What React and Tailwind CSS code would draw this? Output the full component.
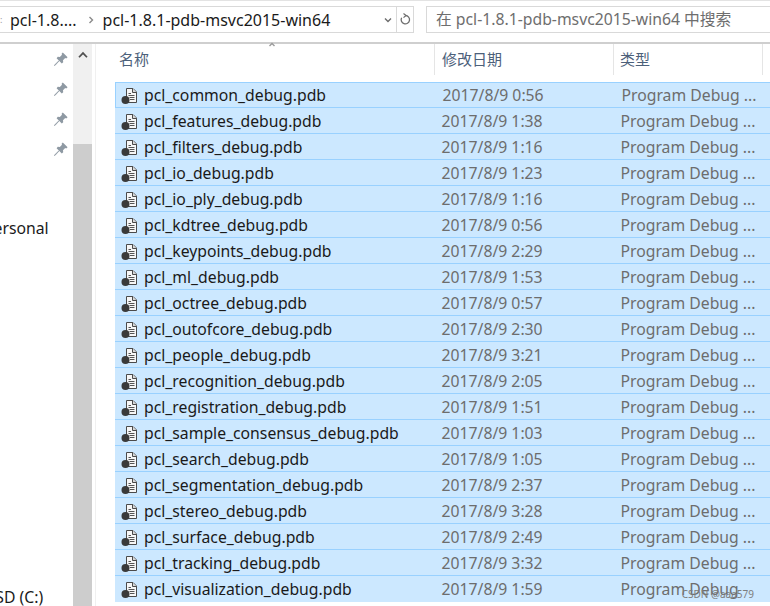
import React from 'react';

const files = [
  ['pcl_common_debug.pdb', '2017/8/9 0:56'],
  ['pcl_features_debug.pdb', '2017/8/9 1:38'],
  ['pcl_filters_debug.pdb', '2017/8/9 1:16'],
  ['pcl_io_debug.pdb', '2017/8/9 1:23'],
  ['pcl_io_ply_debug.pdb', '2017/8/9 1:16'],
  ['pcl_kdtree_debug.pdb', '2017/8/9 0:56'],
  ['pcl_keypoints_debug.pdb', '2017/8/9 2:29'],
  ['pcl_ml_debug.pdb', '2017/8/9 1:53'],
  ['pcl_octree_debug.pdb', '2017/8/9 0:57'],
  ['pcl_outofcore_debug.pdb', '2017/8/9 2:30'],
  ['pcl_people_debug.pdb', '2017/8/9 3:21'],
  ['pcl_recognition_debug.pdb', '2017/8/9 2:05'],
  ['pcl_registration_debug.pdb', '2017/8/9 1:51'],
  ['pcl_sample_consensus_debug.pdb', '2017/8/9 1:03'],
  ['pcl_search_debug.pdb', '2017/8/9 1:05'],
  ['pcl_segmentation_debug.pdb', '2017/8/9 2:37'],
  ['pcl_stereo_debug.pdb', '2017/8/9 3:28'],
  ['pcl_surface_debug.pdb', '2017/8/9 2:49'],
  ['pcl_tracking_debug.pdb', '2017/8/9 3:32'],
  ['pcl_visualization_debug.pdb', '2017/8/9 1:59'],
];

const fontStack = "font-['Noto_Sans','Noto_Sans_CJK_SC',sans-serif]";

// Pin icon from the quick access list
const PinIcon = () => (
  <svg width="14" height="14" viewBox="0 0 14 14">
    <path d="M8.8 0.4 L13.6 5.2 L12.2 6.4 L11.2 6 L9 8.2 L9.2 10.2 L7.8 11.4 L2.6 6.2 L3.8 4.8 L5.8 5 L8 2.8 L7.6 1.8 Z" fill="#8e99a3" />
    <path d="M5 9 L1 13.4 L0.4 13.6 L0.6 13 L4.8 8.8 Z" fill="#8e99a3" stroke="#8e99a3" strokeWidth="0.6" />
  </svg>
);

// .pdb file icon: page with lines and a dark dot at the bottom left
const FileIcon = () => (
  <svg width="17" height="18" viewBox="0 0 17 18" className="shrink-0">
    <path d="M5.5 1.5 H12 L15.5 5 V15.5 H5.5 Z" fill="#f7f7f7" stroke="#4a4a4a" strokeWidth="1" />
    <path d="M11.5 1.5 V5.5 H15.5" fill="#d8d8d8" stroke="#4a4a4a" strokeWidth="1" />
    <path d="M7.5 6.5 H10 M7.5 8.5 H13.5 M8.5 10.5 H13.5 M9 12.5 H13.5" stroke="#555" strokeWidth="1" />
    <circle cx="4.5" cy="13" r="4" fill="#3a3a3a" />
  </svg>
);

const Chevron = ({ d, w = 8, h = 8, color = '#6d6d6d' }) => (
  <svg width={w} height={h} viewBox="0 0 8 8" fill="none">
    <path d={d} stroke={color} strokeWidth="1.4" />
  </svg>
);

const App = () => {
  return (
    <div className={`w-[770px] h-[606px] overflow-hidden bg-white flex flex-col ${fontStack}`}>
      {/* Address and search bar */}
      <div className="h-[44px] shrink-0 border-t border-t-[#e3e3e3] border-b-2 border-b-[#cfcfcf] flex pt-[5px] items-start">
        <div className="w-[414px] h-[27px] border-y border-r border-[#d9d9d9] flex items-center text-[16px] text-[#1a1a1a] shrink-0">
          <span className="w-[9px] text-[#9a9a9a] text-[9px]">:</span>
          <span className="ml-px whitespace-nowrap">pcl-1.8....</span>
          <span className="ml-[10px] mr-[8px]"><Chevron d="M2.5 1 L5.5 4 L2.5 7" color="#8a8a8a" /></span>
          <span className="whitespace-nowrap">pcl-1.8.1-pdb-msvc2015-win64</span>
          <span className="ml-auto h-full w-[17px] flex items-center justify-center"><Chevron d="M1 2.5 L4 5.5 L7 2.5" /></span>
          <span className="h-full w-[17px] border-l border-[#d9d9d9] flex items-center justify-center">
            <svg width="12" height="13" viewBox="0 0 12 13" fill="none">
              <path d="M6.5 2.5 A4.2 4.2 0 1 1 2.6 4.8" stroke="#6d6d6d" strokeWidth="1.3" />
              <path d="M4.5 0.5 L7 2.5 L4.5 4.6" stroke="#6d6d6d" strokeWidth="1.2" />
            </svg>
          </span>
        </div>
        <div className="ml-[12px] flex-1 h-[27px] border-y border-l border-[#d9d9d9] flex items-center pl-[9px] text-[15.75px] text-[#6e6e6e] whitespace-nowrap">
          在 pcl-1.8.1-pdb-msvc2015-win64 中搜索
        </div>
      </div>

      <div className="flex-1 flex min-h-0">
        {/* Navigation pane */}
        <div className="w-[73px] shrink-0 overflow-hidden relative flex flex-col text-[15.75px] text-[#1a1a1a]">
          <div className="flex flex-col gap-[16px] items-end pr-[5px] pt-[8px]">
            <PinIcon />
            <PinIcon />
            <PinIcon />
            <PinIcon />
          </div>
          <div className="mt-[62px] -ml-[16px] whitespace-nowrap leading-[20px]">Personal</div>
          <div className="mt-auto -ml-[17px] whitespace-nowrap leading-[20px] -mb-[1px]">OSD (C:)</div>
        </div>

        {/* Scrollbar */}
        <div className="w-[19px] shrink-0 bg-[#f0f0f0] flex flex-col">
          <div className="h-[15px] flex items-center justify-center mt-[3px]">
            <Chevron d="M0.8 5.8 L4 2.5 L7.2 5.8" w={10} h={10} color="#505050" />
          </div>
          <div className="mt-[82px] flex-1 bg-[#cdcdcd]" />
        </div>

        {/* File list */}
        <div className="flex-1 min-w-0 ml-[3px] border-l border-[#f0f0f0] relative pl-[19px] flex flex-col">
          <div className="h-[38px] shrink-0 flex text-[15px] text-[#4c607a] relative">
            <div className="w-[320px] pl-[4px] border-r border-[#e5e5e5] flex items-center h-[31px]">名称</div>
            <div className="w-[179px] pl-[7px] border-r border-[#e5e5e5] flex items-center h-[31px]">修改日期</div>
            <div className="w-[149px] pl-[6px] border-r border-[#e5e5e5] flex items-center h-[31px]">类型</div>
            <div className="absolute left-[153px] top-[-3px]">
              <Chevron d="M1.5 5 L4 2.5 L6.5 5" color="#9a9a9a" />
            </div>
          </div>
          <div className="flex flex-col">
            {files.map(([name, date], i) => (
              <div
                key={name}
                className={`h-[26px] shrink-0 flex items-center pt-[2px] bg-[#cce8ff] border-b border-[#99d1ff] text-[15.75px] ${i === 0 ? 'border-t border-l' : ''} ${i === files.length - 1 ? 'border-b-0' : ''}`}
              >
                <div className={`w-[326.5px] flex items-center gap-[6px] text-[#1a1a1a] whitespace-nowrap ${i === 0 ? 'pl-[5px]' : 'pl-[6px]'}`}>
                  <FileIcon />
                  <span>{name}</span>
                </div>
                <div className="w-[179px] text-[#6d6d6d] whitespace-nowrap">{date}</div>
                <div className="text-[#6d6d6d] whitespace-nowrap">{i === files.length - 1 ? 'Program Debug' : 'Program Debug ...'}</div>
              </div>
            ))}
          </div>
          {/* Watermark over the last row */}
          <div className="absolute right-[16px] bottom-[5px] text-[10px] leading-[14px] text-[#7d7d7d] whitespace-nowrap">CSDN @aaa579</div>
        </div>
      </div>
    </div>
  );
};

export default App;
